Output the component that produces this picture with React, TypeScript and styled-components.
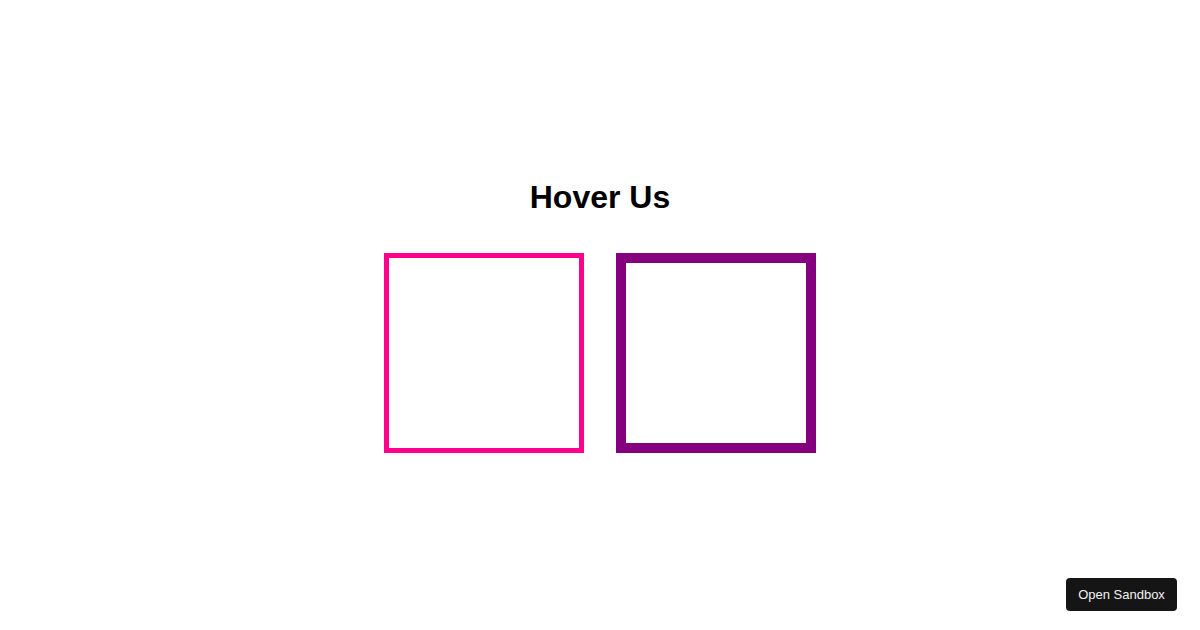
import React from 'react';
import styled, { createGlobalStyle } from 'styled-components';

const GlobalStyle = createGlobalStyle`
  html, body {
    margin: 0;
    padding: 0;
    background: #ffffff;
  }
  body {
    font-family: "Liberation Sans", Arial, Helvetica, sans-serif;
  }
`;

const Page = styled.div`
  min-height: 100vh;
  display: flex;
  flex-direction: column;
  align-items: center;
  justify-content: center;
`;

const Title = styled.h1`
  margin: 0 0 37px;
  padding-top: 1px;
  font-size: 32px;
  font-weight: 700;
  color: #000;
`;

const Row = styled.div`
  display: flex;
  gap: 32px;
`;

const Box = styled.div<{ $color: string; $width: number }>`
  box-sizing: border-box;
  width: 200px;
  height: 200px;
  border: ${p => p.$width}px solid ${p => p.$color};
  transition: transform 0.3s ease;

  &:hover {
    transform: scale(1.05);
  }
`;

const SandboxButton = styled.a`
  position: fixed;
  right: 23px;
  bottom: 19px;
  display: flex;
  align-items: center;
  justify-content: center;
  width: 111px;
  height: 33px;
  border-radius: 4px;
  background: #151515;
  color: #f2f2f2;
  font-family: "Liberation Sans", Arial, sans-serif;
  font-size: 13px;
  text-decoration: none;
`;

export default function App() {
  return (
    <>
      <GlobalStyle />
      <Page>
        <Title>Hover Us</Title>
        <Row>
          <Box $color="#ff008c" $width={5} />
          <Box $color="#85007f" $width={10} />
        </Row>
      </Page>
      <SandboxButton href="#">Open Sandbox</SandboxButton>
    </>
  );
}
